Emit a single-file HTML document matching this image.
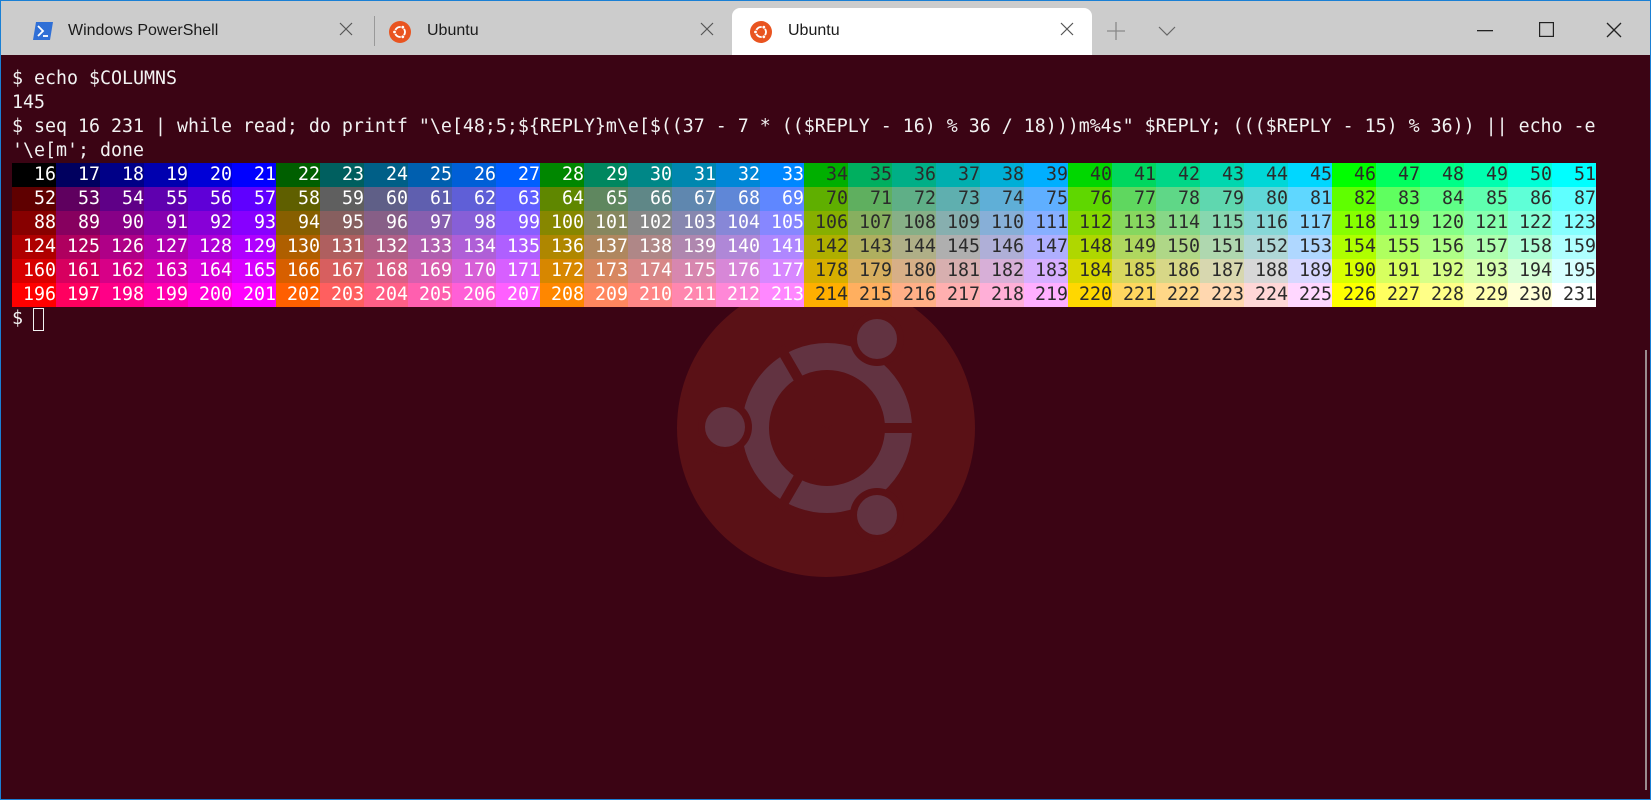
<!DOCTYPE html>
<html><head><meta charset="utf-8"><style>
*{margin:0;padding:0;box-sizing:border-box}
html,body{width:1651px;height:800px;overflow:hidden}
body{background:#3b0414;position:relative;font-family:"DejaVu Sans Mono","Liberation Mono",monospace}
.frame{position:absolute;inset:0;border:1px solid #1a7fd4;pointer-events:none;z-index:10}
.tabbar{position:absolute;left:0;top:0;width:1651px;height:55px;background:#cccccc;font-family:"Liberation Sans",sans-serif;font-size:16px;color:#1a1a1a}
.tab{position:absolute;top:8px;height:47px}
.active{left:732px;width:360px;background:#fff;border-radius:8px 8px 0 0}
.lbl{position:absolute;top:22px;line-height:18px}
.ic{position:absolute;top:21px}
.x{position:absolute;top:22px}
.sep{position:absolute;left:374px;top:16px;width:1px;height:30px;background:#999}
.term{position:absolute;left:12px;top:67px;color:#f2f2f2;font-size:18.27px;line-height:24px;white-space:pre}
.grid{position:absolute;left:12px;top:163px;font-size:18.27px;line-height:24px}
.row{display:flex;height:24px}
.row span{display:block;width:44px;text-align:right;color:#fff;height:24px}
.row span:nth-child(n+19){color:#2b2b2b}
.cursor{position:absolute;left:33px;top:308px;width:11px;height:23px;border:1px solid #f2f2f2}
.prompt{position:absolute;left:12px;top:307px;color:#f2f2f2;font-size:18.27px;line-height:24px}
.scroll{position:absolute;left:1645px;top:350px;width:2px;height:440px;background:#9a8d90}
</style></head><body>
<div class="frame"></div>
<svg style="position:absolute;left:0;top:0" width="1651" height="800">
  <circle cx="826" cy="428" r="149" fill="#5a1116"/>
  <circle cx="827" cy="428" r="71.5" fill="none" stroke="#623341" stroke-width="27"/>
  <g stroke="#5a1116" stroke-width="10">
    <line x1="827" y1="428" x2="920" y2="428"/>
    <line x1="827" y1="428" x2="780" y2="347"/>
    <line x1="827" y1="428" x2="780" y2="509"/>
  </g>
  <g fill="#5a1116"><circle cx="725" cy="427" r="27"/><circle cx="877" cy="339" r="27"/><circle cx="877" cy="515" r="27"/></g>
  <g fill="#623341"><circle cx="725" cy="427" r="20"/><circle cx="877" cy="339" r="20"/><circle cx="877" cy="515" r="20"/></g>
</svg>
<div class="tabbar">
  <svg class="ic" style="left:32px;top:21px" width="22" height="20" viewBox="0 0 22 20"><polygon points="4,1 21,1 18,19 1,19" fill="#2f6fd6"/><path d="M6 5 L11 10 L6 15" stroke="#fff" stroke-width="1.8" fill="none"/><path d="M11 15 H16" stroke="#fff" stroke-width="1.8"/></svg>
  <div class="lbl" style="left:68px">Windows PowerShell</div>
  <svg class="x" style="left:339px" width="14" height="14" viewBox="0 0 14 14"><path d="M1 1L13 13M13 1L1 13" stroke="#555" stroke-width="1.2"/></svg>
  <div class="sep"></div>
  <svg class="ic" style="left:389px" width="22" height="22" viewBox="0 0 22 22"><circle cx="11" cy="11" r="11" fill="#e95420"/><circle cx="11" cy="11" r="5" fill="none" stroke="#fff" stroke-width="1.8"/><circle cx="5.5" cy="11" r="1.8" fill="#fff" stroke="#e95420" stroke-width="0.8"/><circle cx="13.8" cy="6.2" r="1.8" fill="#fff" stroke="#e95420" stroke-width="0.8"/><circle cx="13.8" cy="15.8" r="1.8" fill="#fff" stroke="#e95420" stroke-width="0.8"/></svg>
  <div class="lbl" style="left:427px">Ubuntu</div>
  <svg class="x" style="left:700px" width="14" height="14" viewBox="0 0 14 14"><path d="M1 1L13 13M13 1L1 13" stroke="#555" stroke-width="1.2"/></svg>
  <div class="tab active"></div>
  <svg class="ic" style="left:750px" width="22" height="22" viewBox="0 0 22 22"><circle cx="11" cy="11" r="11" fill="#e95420"/><circle cx="11" cy="11" r="5" fill="none" stroke="#fff" stroke-width="1.8"/><circle cx="5.5" cy="11" r="1.8" fill="#fff" stroke="#e95420" stroke-width="0.8"/><circle cx="13.8" cy="6.2" r="1.8" fill="#fff" stroke="#e95420" stroke-width="0.8"/><circle cx="13.8" cy="15.8" r="1.8" fill="#fff" stroke="#e95420" stroke-width="0.8"/></svg>
  <div class="lbl" style="left:788px">Ubuntu</div>
  <svg class="x" style="left:1060px" width="14" height="14" viewBox="0 0 14 14"><path d="M1 1L13 13M13 1L1 13" stroke="#555" stroke-width="1.2"/></svg>
  <svg style="position:absolute;left:1106px;top:21px" width="20" height="20" viewBox="0 0 20 20"><path d="M10 1V19M1 10H19" stroke="#888" stroke-width="1.3"/></svg>
  <svg style="position:absolute;left:1158px;top:26px" width="18" height="10" viewBox="0 0 18 10"><path d="M1 1L9 9L17 1" stroke="#666" stroke-width="1.2" fill="none"/></svg>
  <svg style="position:absolute;left:1477px;top:30px" width="16" height="2"><rect width="16" height="1.3" fill="#222"/></svg>
  <svg style="position:absolute;left:1539px;top:22px" width="15" height="15" viewBox="0 0 15 15"><rect x="0.6" y="0.6" width="13.8" height="13.8" fill="none" stroke="#222" stroke-width="1.2"/></svg>
  <svg style="position:absolute;left:1606px;top:22px" width="16" height="16" viewBox="0 0 16 16"><path d="M1 1L15 15M15 1L1 15" stroke="#222" stroke-width="1.3"/></svg>
</div>

<div class="term">$ echo $COLUMNS
145
$ seq 16 231 | while read; do printf "\e[48;5;${REPLY}m\e[$((37 - 7 * (($REPLY - 16) % 36 / 18)))m%4s" $REPLY; ((($REPLY - 15) % 36)) || echo -e
'\e[m'; done</div>

<div class="grid">
<div class="row"><span style="background:#000000">16</span><span style="background:#00005f">17</span><span style="background:#000087">18</span><span style="background:#0000af">19</span><span style="background:#0000d7">20</span><span style="background:#0000ff">21</span><span style="background:#005f00">22</span><span style="background:#005f5f">23</span><span style="background:#005f87">24</span><span style="background:#005faf">25</span><span style="background:#005fd7">26</span><span style="background:#005fff">27</span><span style="background:#008700">28</span><span style="background:#00875f">29</span><span style="background:#008787">30</span><span style="background:#0087af">31</span><span style="background:#0087d7">32</span><span style="background:#0087ff">33</span><span style="background:#00af00">34</span><span style="background:#00af5f">35</span><span style="background:#00af87">36</span><span style="background:#00afaf">37</span><span style="background:#00afd7">38</span><span style="background:#00afff">39</span><span style="background:#00d700">40</span><span style="background:#00d75f">41</span><span style="background:#00d787">42</span><span style="background:#00d7af">43</span><span style="background:#00d7d7">44</span><span style="background:#00d7ff">45</span><span style="background:#00ff00">46</span><span style="background:#00ff5f">47</span><span style="background:#00ff87">48</span><span style="background:#00ffaf">49</span><span style="background:#00ffd7">50</span><span style="background:#00ffff">51</span></div>
<div class="row"><span style="background:#5f0000">52</span><span style="background:#5f005f">53</span><span style="background:#5f0087">54</span><span style="background:#5f00af">55</span><span style="background:#5f00d7">56</span><span style="background:#5f00ff">57</span><span style="background:#5f5f00">58</span><span style="background:#5f5f5f">59</span><span style="background:#5f5f87">60</span><span style="background:#5f5faf">61</span><span style="background:#5f5fd7">62</span><span style="background:#5f5fff">63</span><span style="background:#5f8700">64</span><span style="background:#5f875f">65</span><span style="background:#5f8787">66</span><span style="background:#5f87af">67</span><span style="background:#5f87d7">68</span><span style="background:#5f87ff">69</span><span style="background:#5faf00">70</span><span style="background:#5faf5f">71</span><span style="background:#5faf87">72</span><span style="background:#5fafaf">73</span><span style="background:#5fafd7">74</span><span style="background:#5fafff">75</span><span style="background:#5fd700">76</span><span style="background:#5fd75f">77</span><span style="background:#5fd787">78</span><span style="background:#5fd7af">79</span><span style="background:#5fd7d7">80</span><span style="background:#5fd7ff">81</span><span style="background:#5fff00">82</span><span style="background:#5fff5f">83</span><span style="background:#5fff87">84</span><span style="background:#5fffaf">85</span><span style="background:#5fffd7">86</span><span style="background:#5fffff">87</span></div>
<div class="row"><span style="background:#870000">88</span><span style="background:#87005f">89</span><span style="background:#870087">90</span><span style="background:#8700af">91</span><span style="background:#8700d7">92</span><span style="background:#8700ff">93</span><span style="background:#875f00">94</span><span style="background:#875f5f">95</span><span style="background:#875f87">96</span><span style="background:#875faf">97</span><span style="background:#875fd7">98</span><span style="background:#875fff">99</span><span style="background:#878700">100</span><span style="background:#87875f">101</span><span style="background:#878787">102</span><span style="background:#8787af">103</span><span style="background:#8787d7">104</span><span style="background:#8787ff">105</span><span style="background:#87af00">106</span><span style="background:#87af5f">107</span><span style="background:#87af87">108</span><span style="background:#87afaf">109</span><span style="background:#87afd7">110</span><span style="background:#87afff">111</span><span style="background:#87d700">112</span><span style="background:#87d75f">113</span><span style="background:#87d787">114</span><span style="background:#87d7af">115</span><span style="background:#87d7d7">116</span><span style="background:#87d7ff">117</span><span style="background:#87ff00">118</span><span style="background:#87ff5f">119</span><span style="background:#87ff87">120</span><span style="background:#87ffaf">121</span><span style="background:#87ffd7">122</span><span style="background:#87ffff">123</span></div>
<div class="row"><span style="background:#af0000">124</span><span style="background:#af005f">125</span><span style="background:#af0087">126</span><span style="background:#af00af">127</span><span style="background:#af00d7">128</span><span style="background:#af00ff">129</span><span style="background:#af5f00">130</span><span style="background:#af5f5f">131</span><span style="background:#af5f87">132</span><span style="background:#af5faf">133</span><span style="background:#af5fd7">134</span><span style="background:#af5fff">135</span><span style="background:#af8700">136</span><span style="background:#af875f">137</span><span style="background:#af8787">138</span><span style="background:#af87af">139</span><span style="background:#af87d7">140</span><span style="background:#af87ff">141</span><span style="background:#afaf00">142</span><span style="background:#afaf5f">143</span><span style="background:#afaf87">144</span><span style="background:#afafaf">145</span><span style="background:#afafd7">146</span><span style="background:#afafff">147</span><span style="background:#afd700">148</span><span style="background:#afd75f">149</span><span style="background:#afd787">150</span><span style="background:#afd7af">151</span><span style="background:#afd7d7">152</span><span style="background:#afd7ff">153</span><span style="background:#afff00">154</span><span style="background:#afff5f">155</span><span style="background:#afff87">156</span><span style="background:#afffaf">157</span><span style="background:#afffd7">158</span><span style="background:#afffff">159</span></div>
<div class="row"><span style="background:#d70000">160</span><span style="background:#d7005f">161</span><span style="background:#d70087">162</span><span style="background:#d700af">163</span><span style="background:#d700d7">164</span><span style="background:#d700ff">165</span><span style="background:#d75f00">166</span><span style="background:#d75f5f">167</span><span style="background:#d75f87">168</span><span style="background:#d75faf">169</span><span style="background:#d75fd7">170</span><span style="background:#d75fff">171</span><span style="background:#d78700">172</span><span style="background:#d7875f">173</span><span style="background:#d78787">174</span><span style="background:#d787af">175</span><span style="background:#d787d7">176</span><span style="background:#d787ff">177</span><span style="background:#d7af00">178</span><span style="background:#d7af5f">179</span><span style="background:#d7af87">180</span><span style="background:#d7afaf">181</span><span style="background:#d7afd7">182</span><span style="background:#d7afff">183</span><span style="background:#d7d700">184</span><span style="background:#d7d75f">185</span><span style="background:#d7d787">186</span><span style="background:#d7d7af">187</span><span style="background:#d7d7d7">188</span><span style="background:#d7d7ff">189</span><span style="background:#d7ff00">190</span><span style="background:#d7ff5f">191</span><span style="background:#d7ff87">192</span><span style="background:#d7ffaf">193</span><span style="background:#d7ffd7">194</span><span style="background:#d7ffff">195</span></div>
<div class="row"><span style="background:#ff0000">196</span><span style="background:#ff005f">197</span><span style="background:#ff0087">198</span><span style="background:#ff00af">199</span><span style="background:#ff00d7">200</span><span style="background:#ff00ff">201</span><span style="background:#ff5f00">202</span><span style="background:#ff5f5f">203</span><span style="background:#ff5f87">204</span><span style="background:#ff5faf">205</span><span style="background:#ff5fd7">206</span><span style="background:#ff5fff">207</span><span style="background:#ff8700">208</span><span style="background:#ff875f">209</span><span style="background:#ff8787">210</span><span style="background:#ff87af">211</span><span style="background:#ff87d7">212</span><span style="background:#ff87ff">213</span><span style="background:#ffaf00">214</span><span style="background:#ffaf5f">215</span><span style="background:#ffaf87">216</span><span style="background:#ffafaf">217</span><span style="background:#ffafd7">218</span><span style="background:#ffafff">219</span><span style="background:#ffd700">220</span><span style="background:#ffd75f">221</span><span style="background:#ffd787">222</span><span style="background:#ffd7af">223</span><span style="background:#ffd7d7">224</span><span style="background:#ffd7ff">225</span><span style="background:#ffff00">226</span><span style="background:#ffff5f">227</span><span style="background:#ffff87">228</span><span style="background:#ffffaf">229</span><span style="background:#ffffd7">230</span><span style="background:#ffffff">231</span></div>
</div>
<div class="prompt">$</div>
<div class="cursor"></div>
<div class="scroll"></div>
</body></html>
